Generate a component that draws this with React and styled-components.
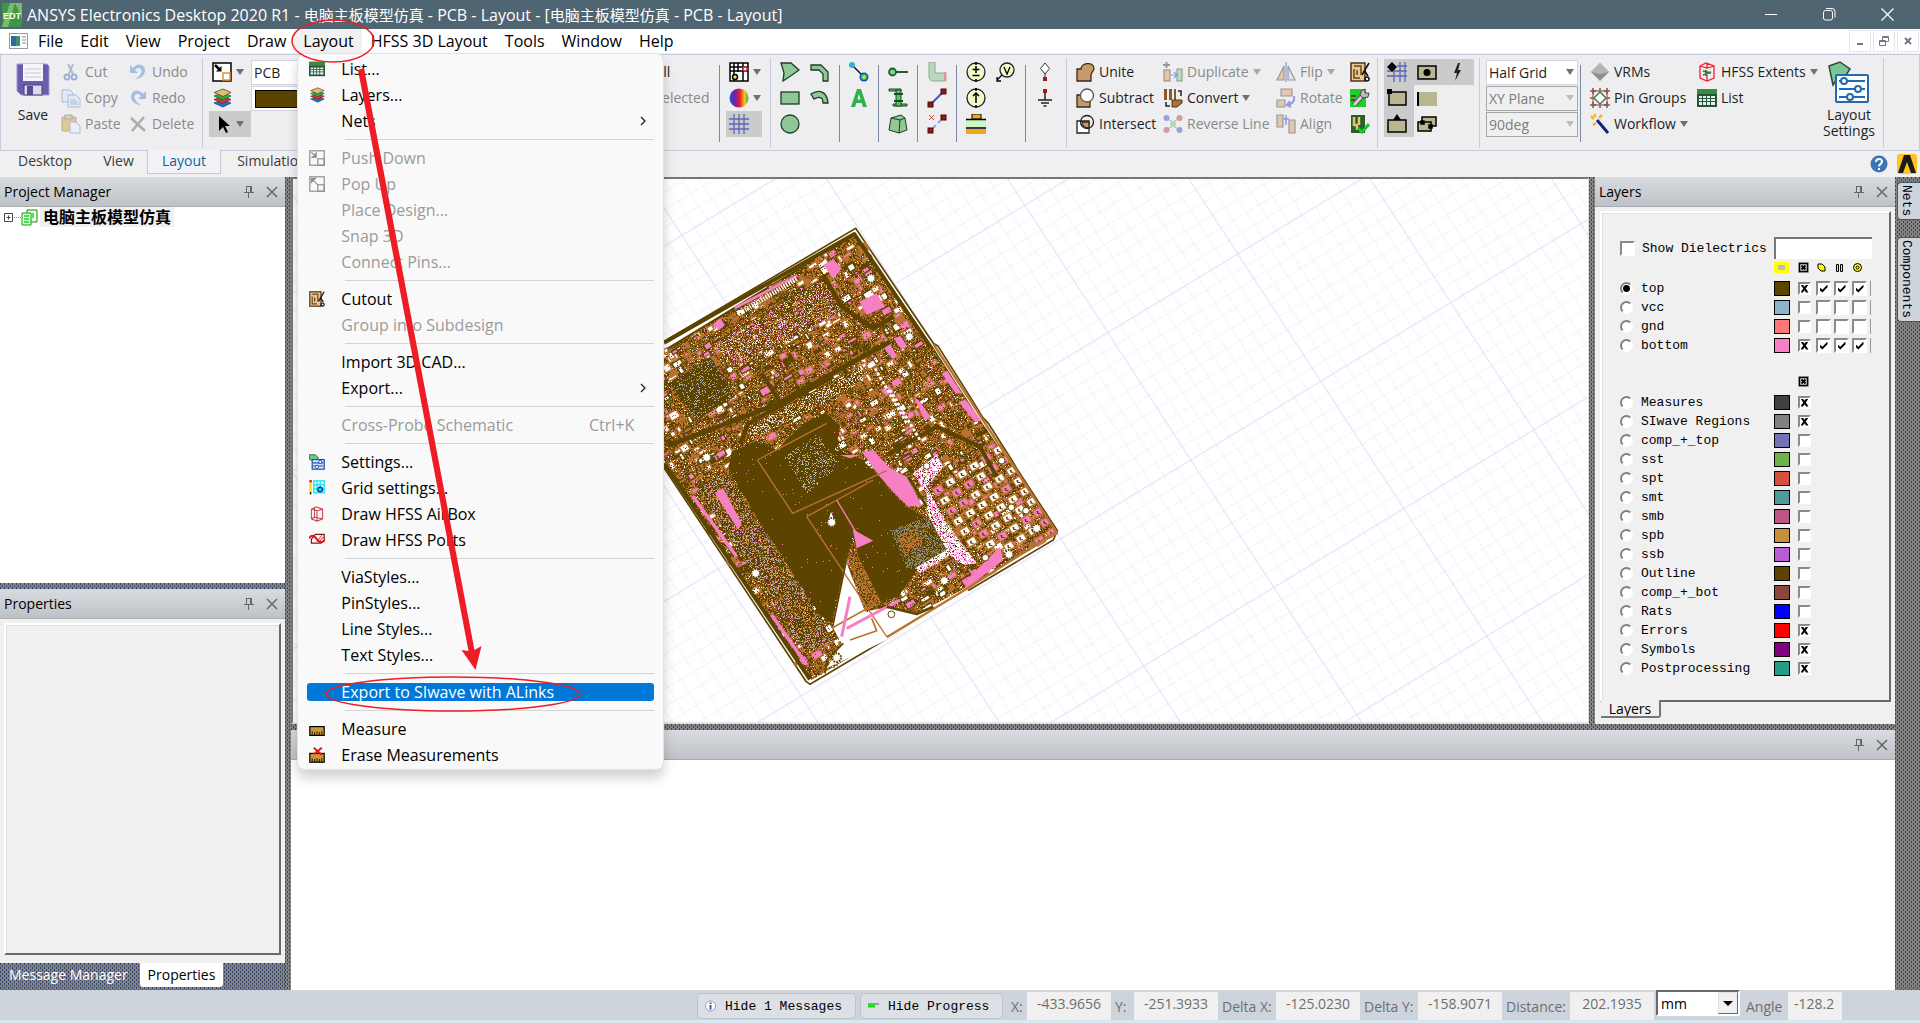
import React from "react";
import styled, { createGlobalStyle, css } from "styled-components";

const UI = `"Open Sans", "Noto Sans", "Noto Sans CJK SC", sans-serif`;
const MONO = `"Liberation Mono", "Noto Sans CJK SC", monospace`;

const Global = createGlobalStyle`
  * { box-sizing: border-box; }
  body { margin: 0; background: #f0f0f0; font-family: ${UI}; font-size: 14px; color: #000; overflow: hidden; }
  button, select, input { font: inherit; color: inherit; margin: 0; }
  button { border: 0; background: none; padding: 0; white-space: nowrap; text-align: left; }
  svg { flex: none; }
`;

const mesh = css`
  background-color: #848484;
  background-image:
    conic-gradient(from 0deg at 1px 2px, transparent 270deg, #33436b 0),
    conic-gradient(from 0deg at 1px 2px, transparent 270deg, #33436b 0);
  background-size: 4px 4px;
  background-position: 0 0, 2px 2px;
`;

/* ---------- shell ---------- */
const Shell = styled.div`
  position: relative;
  display: flex;
  flex-direction: column;
  height: 100vh;
`;
const TitleBar = styled.header`
  display: flex;
  align-items: center;
  height: 29px;
  padding: 0 4px 0 2px;
  gap: 5px;
  background: #506572;
  color: #fff;
  h1 { flex: 1; margin: 0; font-size: 16px; line-height: 28px; font-weight: 400; white-space: nowrap; }
  h1 span { font-size: 15px; }
`;
const WindowButton = styled.button`
  display: grid;
  place-items: center;
  width: 58px;
  height: 29px;
  margin-left: -5px;
`;
const MenuBar = styled.nav`
  display: flex;
  align-items: center;
  height: 24px;
  padding: 0 1px 0 9px;
  background: #fff;
  font-size: 16px;
`;
const MenuItem = styled.div`
  position: relative;
  height: 24px;
  background: ${(p) => (p.$open ? "#f1f1f1" : "none")};
  > button { height: 24px; padding: 0 8px 0 9px; line-height: 24px; }
`;
const Spacer = styled.div`
  flex: 1;
`;
const MdiButton = styled.button`
  display: grid;
  place-items: center;
  width: 22px;
  height: 22px;
  margin-left: 2px;
  border: 1px solid #e4e4e8;
  background: #fff;
`;

/* ---------- ribbon ---------- */
const Ribbon = styled.div`
  display: flex;
  height: 97px;
  padding: 3px 0 0;
  margin-top: 1px;
  border: 1px solid #c9c9dc;
  background: #eeeef1;
  overflow: hidden;
`;
const Group = styled.section`
  display: flex;
  height: 90px;
  padding: 1px ${(p) => p.$pr ?? 8}px 0 ${(p) => p.$pl ?? 8}px;
  border-right: 1px solid #c9c9dc;
  width: ${(p) => (p.$w ? p.$w + "px" : "auto")};
  flex: none;
`;
const Tools = styled.div`
  display: grid;
  grid-auto-flow: column;
  grid-template-rows: repeat(3, 26px);
  grid-template-columns: ${(p) => p.$cols};
  align-items: center;
  height: 78px;
  flex: none;
`;
const Rule = styled.div`
  width: 1px;
  height: 77px;
  margin: 6px ${(p) => p.$r ?? 9}px 0 ${(p) => p.$l ?? 9}px;
  background: #7b8aa0;
  flex: none;
`;
const Tool = styled.button`
  display: flex;
  align-items: center;
  gap: 4px;
  height: 26px;
  line-height: 26px;
  color: #1e1e1e;
  padding: 0 0 0 ${(p) => (p.$pad ? 3 : 0)}px;
  background: ${(p) => (p.$on ? "#cbcbcb" : "none")};
  &:disabled { color: #8a8a8a; }
  &:disabled svg { opacity: 0.55; }
`;
const BigTool = styled.button`
  display: flex;
  flex-direction: column;
  align-items: center;
  width: ${(p) => p.$w}px;
  padding-top: 2px;
  gap: ${(p) => p.$gap ?? 4}px;
  line-height: 16px;
  text-align: center;
  white-space: normal;
  color: #1e1e1e;
`;
const PickWrap = styled.div`
  position: relative;
  width: ${(p) => p.$w}px;
  height: 25px;
  select {
    appearance: none;
    width: 100%;
    height: 25px;
    padding: 0 2px;
    border: 1px solid ${(p) => (p.$off ? "#a6a6a6" : "#d4d4de")};
    border-radius: 0;
    background: ${(p) => (p.$off ? "#f0f0f0" : "#fff")};
    color: ${(p) => (p.$off ? "#7d7d7d" : "#1e1e1e")};
    opacity: 1;
  }
  svg { position: absolute; right: 4px; top: 9px; pointer-events: none; opacity: ${(p) => (p.$off ? 0.4 : 1)}; }
`;
const ColorPick = styled.button`
  width: 120px;
  height: 25px;
  padding: 3px;
  border: 1px solid #d4d4de;
  background: #fff;
  &::before { content: ""; display: block; height: 16px; border: 1px solid #000; background: #5c4400; }
`;
const TabRow = styled.div`
  display: flex;
  align-items: center;
  height: 27px;
  margin-top: -1px;
  padding-right: 3px;
  background: linear-gradient(#c9c9dc 1px, #f0f0f0 1px);
  z-index: 1;
`;
const RibbonTab = styled.button`
  height: ${(p) => (p.$on ? 24 : 23)}px;
  width: ${(p) => p.$w}px;
  padding-bottom: 2px;
  line-height: 20px;
  text-align: center;
  color: ${(p) => (p.$on ? "#0b64a0" : "#3c3c3c")};
  border: solid #c9c9dc;
  border-width: ${(p) => (p.$on ? "0 1px 1px" : "0")};
  background: ${(p) => (p.$on ? "#f3f3f7" : "none")};
  align-self: flex-start;
`;

/* ---------- docking layout ---------- */
const Body = styled.main`
  display: flex;
  flex: 1;
  min-height: 0;
`;
const Side = styled.aside`
  display: flex;
  flex-direction: column;
  width: 285px;
  flex: none;
`;
const Center = styled.div`
  display: flex;
  flex-direction: column;
  flex: 1;
  min-width: 0;
`;
const Upper = styled.div`
  display: flex;
  flex: 1;
  min-height: 0;
`;
const VSplit = styled.div`
  ${mesh}
  width: 6px;
  flex: none;
`;
const HSplit = styled.div`
  ${mesh}
  height: 6px;
  flex: none;
`;
const PanelHead = styled.div`
  display: flex;
  align-items: center;
  justify-content: space-between;
  height: 30px;
  padding: 0 7px 0 4px;
  flex: none;
  border-bottom: 1px solid #a9acb0;
  background: linear-gradient(#d8dbdf, #bec1c5);
  h2 { margin: 0; font-size: 14px; font-weight: 400; }
  div { display: flex; gap: 12px; }
  button { display: grid; }
`;
const Tree = styled.div`
  flex: 1;
  background: #fff;
  padding: 0 4px;
`;
const TreeRow = styled.div`
  display: flex;
  align-items: center;
  gap: 2px;
  height: 20px;
  b { padding: 0 3px; line-height: 20px; font-size: 16px; background: #f0f0f0; }
`;
const PropsPanel = styled.section`
  display: flex;
  flex-direction: column;
  height: 374px;
  flex: none;
  background: #f0f0f0;
`;
const Frame = styled.div`
  flex: 1;
  margin: ${(p) => p.$m};
  border: 2px solid;
  border-color: #fff #696969 #696969 #fff;
  box-shadow: inset 1px 1px 0 #e0e0e0;
  overflow: hidden;
`;
const DockTabs = styled.div`
  ${mesh}
  display: flex;
  gap: 4px;
  height: 27px;
  flex: none;
  padding-left: 1px;
`;
const DockTab = styled.button`
  height: 24px;
  padding: 0 8px;
  line-height: 24px;
  font-size: 14px;
  border-radius: 0 0 3px 3px;
  color: ${(p) => (p.$on ? "#000" : "#fff")};
  background: ${(p) => (p.$on ? "#fff" : "none")};
`;
const View = styled.section`
  display: flex;
  flex: 1;
  min-width: 0;
  overflow: hidden;
  background: #fff;
  border: solid;
  border-width: 2px 1px 2px 2px;
  border-color: #777 #e3e3e3 #e3e3e3 #777;
  > svg { flex: 1; min-width: 0; }
`;
const LayerPanel = styled.aside`
  display: flex;
  flex-direction: column;
  width: 300px;
  flex: none;
  background: #f0f0f0;
`;
const LayerTab = styled.button`
  align-self: flex-start;
  width: 60px;
  height: 18px;
  margin: -2px 0 6px 6px;
  text-align: center;
  line-height: 18px;
  background: #f0f0f0;
  border: 2px solid #777;
  border-width: 0 2px 2px 0;
  border-radius: 0 0 3px 0;
  overflow: hidden;
`;
const LayerList = styled.div`
  width: 270px;
  padding: 24px 0 0 18px;
  font-family: ${MONO};
  font-size: 13px;
  overflow: hidden;
`;
const LayerRow = styled.div`
  display: grid;
  grid-template-columns: 154px 24px 18px 18px 18px 18px 1px;
  align-items: center;
  height: ${(p) => p.$h ?? 19}px;
  margin: ${(p) => p.$m ?? 0};
  label { display: flex; align-items: center; gap: 8px; white-space: nowrap; overflow: hidden; }
`;
const DielRow = styled.div`
  display: grid;
  grid-template-columns: 148px 98px;
  column-gap: 6px;
  align-items: center;
  height: 22px;
  label { display: flex; align-items: center; gap: 7px; white-space: nowrap; overflow: hidden; }
  input[type="text"] { height: 22px; width: 98px; border: solid; border-width: 2px 0 0 2px; border-color: #777; background: #fff; }
`;
const Radio = styled.input`
  appearance: none;
  width: 13px;
  height: 13px;
  border-radius: 50%;
  border: 2px solid;
  border-color: #808080 #fff #fff #808080;
  background: #fff;
  flex: none;
  &:checked { background: radial-gradient(circle, #000 3px, #fff 4px); }
`;
const Check = styled.input`
  appearance: none;
  display: grid;
  place-items: center;
  width: ${(p) => p.$size}px;
  height: ${(p) => p.$size}px;
  border: 2px solid;
  border-color: #8a8a8a #fff #fff #8a8a8a;
  background: #fff;
  flex: none;
  &:checked::before {
    content: "";
    width: 8px;
    height: 8px;
    background: #000;
    clip-path: ${(p) =>
      p.$cross
        ? "polygon(0 0, 30% 0, 50% 28%, 70% 0, 100% 0, 66% 50%, 100% 100%, 70% 100%, 50% 72%, 30% 100%, 0 100%, 34% 50%)"
        : "polygon(0 35%, 36% 65%, 100% 0, 100% 35%, 36% 100%, 0 68%)"};
  }
`;
const Swatch = styled.span`
  width: 16px;
  height: 15px;
  border: 1px solid #000;
  background: ${(p) => p.$c};
`;
const Cut = styled.span`
  height: 15px;
  background: #999;
`;
const Rail = styled.div`
  ${mesh}
  display: flex;
  flex-direction: column;
  align-items: flex-end;
  gap: 17px;
  width: 25px;
  padding-top: 5px;
  flex: none;
`;
const RailTab = styled.button`
  width: 23px;
  padding: 2px 5px 3px 0;
  writing-mode: vertical-rl;
  line-height: 17px;
  font-family: ${MONO};
  font-size: 13px;
  border: 1px solid #3f5878;
  border-right: 0;
  border-radius: 4px 0 0 4px;
  background: #ced4dc;
`;
const Output = styled.section`
  display: flex;
  flex-direction: column;
  height: 260px;
  flex: none;
  background: #fff;
`;

/* ---------- status bar ---------- */
const Status = styled.footer`
  display: flex;
  justify-content: flex-end;
  height: 33px;
  flex: none;
  padding-right: 78px;
  background: #ced4dc;
  border-bottom: 3px solid #d9e9f2;
  color: #6e6e6e;
`;
const StatusButton = styled.button`
  display: flex;
  align-items: center;
  gap: 9px;
  width: ${(p) => p.$w}px;
  height: 26px;
  margin: 3px 4px 0 0;
  padding-left: 7px;
  border: 1px solid #bcc4ce;
  border-radius: 4px;
  background: #dcdfe4;
  color: #000;
  font-family: ${MONO};
  font-size: 13px;
`;
const StatusLabel = styled.label`
  width: ${(p) => p.$w}px;
  padding-left: 4px;
  line-height: 33px;
  white-space: nowrap;
`;
const StatusValue = styled.input`
  width: ${(p) => p.$w ?? 84}px;
  height: 28px;
  margin-top: 2px;
  padding: 0 0 6px;
  border: 0;
  border-radius: 0;
  text-align: ${(p) => (p.$w ? "left" : "center")};
  text-indent: ${(p) => (p.$w ? 6 : 0)}px;
  background: #f0f0f0;
`;
const UnitWrap = styled.div`
  position: relative;
  width: 84px;
  height: 26px;
  margin: 0 2px;
  select {
    appearance: none;
    width: 84px;
    height: 26px;
    padding: 0 3px;
    color: #000;
    border: 2px solid;
    border-color: #696969 #fff #fff #696969;
    border-radius: 0;
    background: #fff;
  }
  span {
    position: absolute;
    right: 2px;
    top: 2px;
    display: grid;
    place-items: center;
    width: 20px;
    height: 22px;
    background: #f0f0f0;
    border: 1px solid;
    border-color: #e3e3e3 #696969 #696969 #e3e3e3;
    pointer-events: none;
  }
`;

/* ---------- drop-down menu ---------- */
const Drop = styled.div`
  position: absolute;
  top: 24px;
  left: 3px;
  z-index: 5;
  display: flex;
  flex-direction: column;
  width: 367px;
  padding: 2px 9px 0;
  height: 717px;
  border: 1px solid #e2e2e2;
  border-radius: 8px;
  background: #f9f9f9;
  box-shadow: 0 8px 12px rgba(0, 0, 0, 0.18);
`;
const DropItem = styled.button`
  display: grid;
  grid-template-columns: 34px 1fr auto;
  align-items: center;
  width: 100%;
  height: 26px;
  flex: none;
  padding: 0 8px 0 0;
  line-height: 18px;
  color: ${(p) => (p.$on ? "#fff" : "#000")};
  &:disabled { color: #9b9b9b; }
  > svg { margin-left: 2px; }
  ${(p) => p.$on && css`height: 18px; margin: 4px 0; background: #0078d7; border-radius: 3px;`}
  kbd { font: inherit; padding-right: 12px; }
`;
const DropRule = styled.hr`
  height: 1px;
  flex: none;
  margin: 5px 0 5px 38px;
  border: 0;
  background: #d3d3d3;
`;
const Annotation = styled.svg`
  position: absolute;
  left: 0;
  top: 0;
  z-index: 6;
  pointer-events: none;
`;

/* ---------- icons ---------- */
const G = "#8fc796";
const O = "#1d3d24";
const shapes = {
  cut: <g fill="none" strokeWidth="2"><path d="M7 2l5 10M12 2L8 12" stroke="#8392a8" /><circle cx="6" cy="15" r="2.5" stroke="#5b7fc0" /><circle cx="13" cy="15" r="2.5" stroke="#5b7fc0" /></g>,
  copy: <g fill="#dce8f8" stroke="#6f93c8"><path d="M1 2h8l3 3v9H1z" /><path d="M7 7h8l4 4v8H7z" /><path d="M9 12h6M9 14h8M9 16h8" /></g>,
  paste: <g><rect x="1" y="3" width="14" height="14" rx="1" fill="#d5a84c" stroke="#94722d" /><rect x="4" y="1" width="7" height="4" fill="#bbb" stroke="#777" /><path d="M9 8h6l4 4v7H9z" fill="#e8f0fa" stroke="#7a93b8" /></g>,
  undo: <path d="M2 3v8h8L7 8c4-4 8-1 6 3-1 3-4 5-6 6 8 0 12-7 9-12-3-4-8-3-11 1z" fill="#6c97da" />,
  redo: <path d="M18 3v8h-8l3-3C9 4 5 7 7 11c1 3 4 5 6 6-8 0-12-7-9-12 3-4 8-3 11 1z" fill="#6c97da" />,
  del: <path d="M3 4l14 13M16 3L4 17" stroke="#777" strokeWidth="2.5" />,
  hier: <g><rect x="1" y="1" width="18" height="18" fill="#fff" stroke="#000" strokeWidth="1.5" /><rect x="11" y="11" width="7" height="7" fill="#fff" stroke="#e8902b" strokeWidth="1.5" /><path d="M3 3l5 5" stroke="#000" strokeWidth="2.500" /><path d="M9.500 4v5.500H4z" /></g>,
  layers: <g strokeWidth=".8"><path d="M2 15l9-3 8 3-8 4z" fill="#1c6fd0" stroke="#134b8e" /><path d="M2 11.500l9-3 8 3-8 4z" fill="#e53026" stroke="#8e1d15" /><path d="M2 8l9-3 8 3-8 4z" fill="#2ba84a" stroke="#156b2b" /><path d="M2 4.500L11 1l8 3.500-8 4z" fill="#d8bf7a" stroke="#5a4416" /></g>,
  arrow: <path d="M7 2v15l4-4 3 6 2-1-3-6h5z" fill="#000" />,
  net: <g fill="none" stroke="#000" strokeWidth="1.500"><rect x="1" y="1" width="18" height="18" fill="#fff" /><path d="M1 5h18M5 1v18M1 9h18M9 1v9M14 1v18" /><circle cx="6" cy="15" r="2.500" fill="#f0e850" /><circle cx="16" cy="7" r="2" stroke="#e04040" /></g>,
  rainbow: <g><defs><linearGradient id="rb"><stop offset="0" stopColor="#1456c8" /><stop offset=".3" stopColor="#7a1fa0" /><stop offset=".55" stopColor="#e8202a" /><stop offset=".8" stopColor="#f6c820" /><stop offset="1" stopColor="#38b048" /></linearGradient></defs><circle cx="10" cy="10" r="9.500" fill="url(#rb)" /></g>,
  grid: <path d="M5 0v20M10 0v20M15 0v20M0 5h20M0 10h20M0 15h20" stroke="#5b69b8" strokeWidth="1.300" fill="none" />,
  poly: <path d="M1 1l10 0 8 7-7 5-9 6 1-8z" fill={G} stroke={O} strokeWidth="1.300" />,
  rect: <rect x="1" y="4" width="18" height="12" fill={G} stroke={O} strokeWidth="1.300" />,
  circ: <circle cx="10" cy="10" r="9" fill={G} stroke={O} strokeWidth="1.300" />,
  trace: <path d="M1 3h10l7 7v9h-5v-7l-4-4H1z" fill={G} stroke={O} strokeWidth="1.300" />,
  arc: <path d="M1 6c8-5 16-3 17 9h-5c0-6-4-7-9-4z" fill={G} stroke={O} strokeWidth="1.300" />,
  wire: <g><path d="M3 3l12 12" stroke="#000" strokeWidth="1.300" /><circle cx="3" cy="3" r="3" fill="#2bb4d8" /><circle cx="15" cy="15" r="4.500" fill="#1448d0" /><circle cx="15" cy="15" r="3" fill="#3cc860" /><circle cx="15" cy="15" r="1.500" fill="#e8e840" /></g>,
  letter: <path d="M2 19L8 1h4l6 18h-4l-1.300-4H7.300L6 19zM8.300 11.500h3.400L10 6z" fill="#2fb14a" />,
  pin: <g><path d="M6 10h14" stroke="#1f5f28" strokeWidth="2" /><circle cx="4.500" cy="10" r="3.500" fill="#7fd68a" stroke="#1f5f28" strokeWidth="1.800" /></g>,
  via: <g fill="#57c265" stroke="#1b4a22"><path d="M1 1h12v2H1zM5 16h14v2H5z" /><rect x="8" y="2" width="5" height="16" /><path d="M6 6h9M6 13h9" strokeWidth="2" /></g>,
  solid: <g fill={G} stroke={O}><path d="M3 4l10-3 4 3 2 12-8 3-10-3z" /><path d="M3 4l9 2 5-2M12 6l-1 13" /></g>,
  bend: <g><path d="M2 0h6v11h11v8H7c-4 0-5-2-5-5z" fill="#b9d8bd" stroke="#90a894" /><path d="M17 10h2v9h-2z" fill="#f09090" /></g>,
  line: <g fill="#8e1b0e" stroke="#4a0a04"><path d="M4 16L16 4" stroke="#3b55d8" strokeWidth="2" /><rect x="1" y="14" width="5" height="5" /><rect x="14" y="1" width="5" height="5" /></g>,
  unline: <g fill="#8e1b0e" stroke="#4a0a04"><path d="M6 14l9-9" stroke="#8fa6f0" strokeWidth="2" strokeDasharray="4 3" /><rect x="1" y="14" width="5" height="5" /><rect x="14" y="1" width="5" height="5" /><path d="M2 1l5 5M7 1L2 6" stroke="#d04a3a" /></g>,
  volt: <g><circle cx="10" cy="10" r="9" fill="#f4f8c8" stroke="#222" strokeWidth="1.300" /><path d="M10 4v7M6.500 7.500h7M6.500 13.500h7M10 0v3M10 17v3" stroke="#000" strokeWidth="1.500" /></g>,
  amp: <g><circle cx="10" cy="10" r="9" fill="#f4f8c8" stroke="#222" strokeWidth="1.300" /><path d="M10 5v10M7 8l3-3 3 3M10 0v3M10 17v3" stroke="#000" strokeWidth="1.500" fill="none" /></g>,
  probe: <g><circle cx="11" cy="8" r="7" fill="#f4f8c8" stroke="#222" strokeWidth="1.300" /><path d="M8 5l3 7 3-7M6 13l-5 5M1 15v4h4" stroke="#000" strokeWidth="1.300" fill="none" /></g>,
  stack: <g><rect x="6" y="0" width="9" height="5" fill="#f2a81d" stroke="#000" /><rect x="0" y="5" width="20" height="9" fill="#cdf6c6" /><path d="M0 5.500h20M0 14h20" stroke="#000" strokeWidth="1.500" /><rect x="0" y="15" width="20" height="5" fill="#f2a81d" /></g>,
  diode: <g><path d="M10 1l4.500 5.500-4.500 5.500-4.500-5.500z" fill="#fff" stroke="#333" /><path d="M10 12v3" stroke="#333" /><rect x="8" y="15" width="4" height="4" fill="#a01818" /></g>,
  gnd: <g><rect x="8" y="1" width="4" height="4" fill="#a01818" /><path d="M10 5v7M3 12h14M6 15h8M8.500 18h3" stroke="#222" strokeWidth="1.500" /></g>,
  unite: <path d="M2 7h4c0-6 12-8 13-1 0 4-3 4-3 7v6H2z" fill="#c79a6b" stroke="#3c2a14" strokeWidth="1.300" />,
  subtract: <g strokeWidth="1.300"><path d="M2 7h13v12H2z" fill="#c79a6b" stroke="#3c2a14" /><circle cx="12" cy="7.500" r="6.500" fill="#fff" stroke="#555" /></g>,
  intersect: <g strokeWidth="1.300"><path d="M2 7h12v12H2z" fill="#fff" stroke="#222" /><circle cx="12" cy="8" r="6.500" fill="none" stroke="#222" /><path d="M7 8h7v6c-4 0-7-2-7-6z" fill="#c79a6b" stroke="#3c2a14" /></g>,
  dup: <g strokeWidth="1.200"><path d="M0 3h7M3.500 0v6" stroke="#555" strokeWidth="2" /><rect x="1" y="8" width="6" height="11" fill="#dba877" stroke="#6d4a28" /><rect x="14" y="7" width="5" height="12" fill="#8fd09a" stroke="#3c6f46" /><path d="M8 13h5M11 10l3 3-3 3" stroke="#3e49d8" fill="none" /></g>,
  convert: <g><path d="M1 1h3v11H1zM6 1h3v11H6zM11 1h2v11h-2z" fill="#8d5a2c" /><path d="M9 12h10v3l-5 4H9z" fill="#a9713c" stroke="#5a3715" /><path d="M15 3h3v5M3 14v4h4" stroke="#222" fill="none" strokeWidth="1.500" /></g>,
  reverse: <g><path d="M3 4l7 4 7-4M3 16l7-4 7 4" stroke="#777" fill="none" /><circle cx="3.500" cy="4" r="3" fill="#5560c8" /><circle cx="16.500" cy="4" r="3" fill="#c85560" /><circle cx="3.500" cy="16" r="3" fill="#c85560" /><circle cx="16.500" cy="16" r="3" fill="#5560c8" /><circle cx="10" cy="10" r="3" fill="#7fc88a" /></g>,
  flip: <g strokeWidth="1.200"><path d="M10 0v20" stroke="#4455d8" /><path d="M8 4v14H1z" fill="#dba877" stroke="#555" /><path d="M12 4v14h7z" fill="#ddd" stroke="#555" /></g>,
  rotate: <g strokeWidth="1.200"><path d="M5 1h11v7H5zM1 12h8v7H1z" fill="#dba877" stroke="#555" /><path d="M18 8c1 6-2 8-6 9M14 13l-3 4 4 2" stroke="#4455d8" fill="none" strokeWidth="2" /></g>,
  align: <g strokeWidth="1.200"><path d="M1 1h6v12H1zM13 6h6v13h-6z" fill="#dba877" stroke="#555" /><path d="M10 1v10M7 5h6" stroke="#4455d8" strokeWidth="1.500" /></g>,
  cutout: <g><rect x="1" y="1" width="14" height="18" fill="#e9c795" stroke="#4f3413" strokeWidth="1.500" /><path d="M4 4h8M4 7v9h6M7 8v5M11 5v8" stroke="#6a4519" strokeWidth="1.500" fill="none" /><path d="M19 1l-7 12M14 8l4 6" stroke="#111" strokeWidth="1.500" /><circle cx="17" cy="17" r="2" fill="none" stroke="#111" strokeWidth="1.500" /></g>,
  repair: <g><rect x="0" y="1" width="16" height="18" fill="#1ccf2a" /><path d="M1 8h5M1 12h4" stroke="#6a4519" strokeWidth="2" /><path d="M4 17L14 6" stroke="#555" strokeWidth="5" /><path d="M4 17L14 6" stroke="#cfcfcf" strokeWidth="3" /><path d="M11 3l4-2 0 4 4 0-1 4-5 1-3-3z" fill="#bbb" stroke="#444" /></g>,
  verify: <g><rect x="1" y="1" width="14" height="18" fill="#2a5f2c" /><path d="M4 3v8h3v5M9 3v8" stroke="#e7c37a" strokeWidth="2.500" fill="none" /><path d="M8 14l4 4 7-8" stroke="#18c828" strokeWidth="3" fill="none" /></g>,
  snapgrid: <g><path d="M7 3v17M13 0v20M18 0v20M0 9h20M0 14h20M10 4h10" stroke="#5b69b8" strokeWidth="1.300" /><path d="M5 0l5 5-5 5-5-5z" fill="#000" /></g>,
  snapctr: <g><rect x="1" y="4" width="18" height="13" fill="#b9b78f" stroke="#000" strokeWidth="1.500" /><circle cx="10" cy="10.500" r="3.500" /></g>,
  bolt: <path d="M11 1L7 11h3l-2 8 6-11h-3l2-7z" fill="#222" />,
  snapv: <g><rect x="2" y="4" width="17" height="13" fill="#b9b78f" stroke="#000" strokeWidth="1.500" /><rect x="0" y="1" width="5" height="5" /></g>,
  snapedge: <g><rect x="1" y="4" width="19" height="14" fill="#b9b78f" /><path d="M1 4v14" stroke="#000" strokeWidth="2" /></g>,
  snapmid: <g><rect x="1" y="6" width="18" height="12" fill="#b9b78f" stroke="#000" strokeWidth="1.500" /><path d="M10 0l4 6H6z" /></g>,
  snapint: <g fill="#b9b78f" stroke="#000" strokeWidth="1.500"><rect x="5" y="3" width="14" height="9" /><rect x="1" y="8" width="13" height="9" /><rect x="4" y="7" width="3" height="3" fill="#000" /><rect x="12" y="11" width="3" height="3" fill="#000" /></g>,
  vrm: <g><path d="M10 1l9 9-9 9-9-9z" fill="#8f8f8f" /><path d="M10 1l9 9-9 2-9-2z" fill="#b4b4b4" /></g>,
  pins: <g fill="none"><rect x="3" y="3" width="14" height="14" stroke="#d05050" strokeWidth="1.300" /><path d="M10 4l6 6-6 6-6-6z" fill="#fff" stroke="#3f7f58" strokeWidth="1.500" /><path d="M3 0v6M0 3h6M17 0v6M14 3h6M3 14v6M0 17h6M17 14v6M14 17h6M10 0v3M10 17v3M0 10h3M17 10h3" stroke="#7a5a4a" strokeWidth="1.500" /></g>,
  wand: <g><path d="M7 6l11 13" stroke="#15237c" strokeWidth="3" /><path d="M1 2l3 3M12 1L9 4M3 11l3-2M5 0v3" stroke="#f2b42a" strokeWidth="2.500" /></g>,
  extents: <g fill="none" stroke="#e23" strokeWidth="1.300"><path d="M3 4l6-3 8 3v12l-7 3-7-3zM3 4l7 2 7-2M10 1v5M10 19v-6" /><path d="M6 9l8 2M6 13l8-3M9 8v6" stroke="#2f7a3a" strokeWidth="1.800" /></g>,
  list: <g><rect x="0" y="1" width="20" height="18" fill="#24543d" /><rect x="0" y="1" width="20" height="5" fill="#3f8a3a" /><path d="M2 8h3v2H2zM6 8h3v2H6zM10 8h3v2h-3zM14 8h4v2h-4zM2 11h3v2H2zM6 11h3v2H6zM10 11h3v2h-3zM14 11h4v2h-4zM2 14h3v3H2zM6 14h3v3H6zM10 14h3v3h-3zM14 14h4v3h-4z" fill="#e7efe9" /></g>,
  push: <g fill="none" stroke="#8f8f8f" strokeWidth="1.500"><rect x="1" y="1" width="18" height="18" /><rect x="11" y="11" width="8" height="8" /><path d="M3 3l6 6M9 4v5H4z" fill="#8f8f8f" /></g>,
  pop: <g fill="none" stroke="#8f8f8f" strokeWidth="1.500"><rect x="1" y="1" width="18" height="18" /><rect x="11" y="11" width="8" height="8" /><path d="M11 11L4 4" /><path d="M3 8V3h5z" fill="#8f8f8f" /></g>,
  settings: <g><path d="M0 1h8l4 4-6 4-5-2z" fill="#6cc98a" stroke="#1d5a36" /><rect x="4" y="7" width="15" height="12" fill="#dbe9fb" stroke="#1c4fa8" strokeWidth="1.500" /><path d="M5 11h13M5 15h13" stroke="#1c4fa8" strokeWidth="1.500" /><circle cx="14" cy="10" r="2" fill="#fff" stroke="#0a2fd0" /><circle cx="10" cy="16" r="2" fill="#fff" stroke="#0a2fd0" /></g>,
  gridset: <g><path d="M2 3v12" stroke="#f0e020" strokeWidth="3" /><path d="M2 0v3" stroke="#e01010" strokeWidth="3" /><path d="M2 15v3" stroke="#222" strokeWidth="2" /><rect x="6" y="1" width="13" height="15" fill="#e7ffff" stroke="#12dff0" strokeWidth="1.500" /><path d="M10 1v15M14 1v15M6 6h13M6 11h13" stroke="#12dff0" strokeWidth="1.500" /><circle cx="14" cy="12" r="3" fill="#26c0f0" stroke="#0a2fa0" strokeWidth="1.500" /></g>,
  airbox: <g fill="none" stroke="#c9404c" strokeWidth="1.300"><path d="M3 4l6-3 8 3v12l-7 3-7-3zM3 4l7 2 7-2M10 6v13M7 2v12l-4 2M7 14l10 2" /></g>,
  ports: <g fill="none"><path d="M8 3h11v8l-4 3H3V9z" stroke="#8e1014" strokeWidth="1.500" /><path d="M10 12l6-8M13 12l5-6" stroke="#8e1014" /><path d="M0 8c3-5 6-4 9 0 3 5 7 6 11 2" stroke="#f01018" strokeWidth="2.500" /></g>,
  ruler: <g><rect x="1" y="7" width="18" height="11" fill="#c9963a" stroke="#000" strokeWidth="1.500" /><path d="M4 18v-5M7 18v-4M10 18v-5M13 18v-4M16 18v-5" stroke="#000" /></g>,
  erase: <g><rect x="1" y="8" width="18" height="11" fill="#c9963a" stroke="#000" strokeWidth="1.500" /><path d="M4 19v-5M7 19v-4M10 19v-5M13 19v-4M16 19v-5" stroke="#000" /><path d="M6 1l10 9M16 1L6 9" stroke="#e8141c" strokeWidth="2.500" /></g>,
};
const Icon = ({ n, s = 20 }) => (
  <svg width={s} height={s} viewBox="0 0 20 20" aria-hidden="true">{shapes[n]}</svg>
);
const Caret = () => (
  <svg width="8" height="6" viewBox="0 0 8 6" aria-hidden="true"><path d="M0 0h8L4 6z" fill="#707070" /></svg>
);

const SaveIcon = () => (
  <svg width="36" height="36" viewBox="0 0 36 36" aria-hidden="true">
    <path d="M2 3h30l2 2v29H6l-4-4z" fill="#6d5cae" stroke="#a49ad0" />
    <rect x="8" y="3" width="20" height="17" fill="#f5f5fa" />
    <path d="M10 8h16M10 12h16M10 16h16" stroke="#c9c9d6" />
    <rect x="9" y="24" width="18" height="10" fill="#dcdce8" stroke="#463a80" />
    <rect x="12" y="25" width="6" height="9" fill="#5a4b98" />
  </svg>
);
const LayoutSettingsIcon = () => (
  <svg width="42" height="42" viewBox="0 0 42 42" aria-hidden="true">
    <path d="M1 5l11-4 10 7-6 9-7 1-4 6z" fill="#7cc596" stroke="#2b4a38" strokeWidth="1.500" />
    <rect x="8" y="14" width="32" height="27" rx="1" fill="#f8fbff" stroke="#2468ae" strokeWidth="2" />
    <path d="M11 20h26M11 28h26M11 36h26" stroke="#2468ae" strokeWidth="2" />
    <g fill="#fff" stroke="#2468ae" strokeWidth="2"><circle cx="16" cy="20" r="3" /><circle cx="30" cy="28" r="3" /><circle cx="22" cy="36" r="3" /></g>
  </svg>
);

/* ---------- board drawing ---------- */
const DARK = "#5c4400";
const COPPER = "#b8732f";
const PINK = "#f77fc4";

const rng = (seed) => () => {
  seed = (seed * 1664525 + 1013904223) >>> 0;
  return seed / 4294967296;
};
const inside = (poly, x, y) => {
  let hit = false;
  for (let i = 0, j = poly.length - 1; i < poly.length; j = i++) {
    const [xi, yi] = poly[i];
    const [xj, yj] = poly[j];
    if (yi > y !== yj > y && x < ((xj - xi) * (y - yi)) / (yj - yi) + xi) hit = !hit;
  }
  return hit;
};
const speckle = (poly, count, seed, size = 3) => {
  const r = rng(seed);
  const xs = poly.map((p) => p[0]);
  const ys = poly.map((p) => p[1]);
  const x0 = Math.max(0, Math.min(...xs)), x1 = Math.max(...xs), y0 = Math.min(...ys), y1 = Math.max(...ys);
  let d = "";
  for (let i = 0; i < count; i++) {
    const x = Math.round((x0 + r() * (x1 - x0)) / 3) * 3;
    const y = Math.round((y0 + r() * (y1 - y0)) / 3) * 3;
    if (inside(poly, x, y)) d += `M${x} ${y}h${size}v${size}h-${size}z`;
  }
  return d;
};
const pts = (p) => p.map((q) => q.join(",")).join(" ");

const outline = [[587, 55], [820, 400], [834, 408], [930, 560], [968, 622], [985, 640], [1055, 750], [1070, 775], [1192, 962], [1180, 990], [450, 1423], [438, 1414], [-160, 515], [-150, 490]];
const inner = [[585, 74], [818, 415], [958, 632], [1048, 762], [1180, 962], [1165, 984], [456, 1406], [442, 1395], [-140, 515]];
const pourA = [[205, 775], [215, 725], [290, 695], [350, 720], [430, 640], [500, 610], [540, 650], [525, 720], [600, 745], [650, 790], [690, 840], [740, 890], [810, 930], [860, 1030], [770, 1080], [715, 1160], [640, 1180], [600, 1050], [575, 970], [545, 1100], [515, 1240], [480, 1215], [380, 1060], [290, 920]];
const pourB = [[30, 520], [150, 440], [225, 560], [110, 630]];
const whiteA = [[577, 965], [517, 1250], [545, 1300], [500, 1375], [680, 1290], [930, 1146], [915, 1135], [820, 1185], [770, 1208], [690, 1190], [615, 1205], [560, 1060]];
const whiteB = [[760, 790], [830, 735], [850, 770], [800, 830], [860, 940], [950, 1060], [910, 1065], [870, 1035], [780, 1090], [765, 1075], [860, 1020], [800, 905], [800, 850]];
const slotArea = [[160, 400], [490, 205], [550, 300], [220, 480]];
const leftStrip = [[110, 830], [200, 790], [520, 1290], [440, 1330]];
const ddr = [[260, 650], [600, 470], [610, 510], [275, 690]];
const gpu = [[370, 740], [470, 670], [540, 760], [440, 850]];
const chip = [[690, 960], [800, 920], [860, 1030], [740, 1080]];

const parts = () => {
  const r = rng(77);
  const fills = ["#fff", PINK, COPPER, DARK, "#fff", PINK, "#fff"];
  const out = [];
  for (let i = 0; i < 1100; i++) {
    const u = r() * 845 + 5;
    const v = r() * 1070 + 10;
    const x = 450 + u * 0.855 - v * 0.546;
    const y = 1422 - u * 0.518 - v * 0.838;
    const w = 8 + r() * 24;
    const h = 6 + r() * 18;
    const f = fills[Math.floor(r() * fills.length)];
    const s = r() > 0.4 ? COPPER : DARK;
    if (x < -20 || inside(pourA, x, y) || inside(pourB, x, y) || inside(whiteA, x, y) || inside(whiteB, x, y) || !inside(inner, x, y)) continue;
    out.push(<rect key={i} x={-w / 2} y={-h / 2} width={w} height={h} fill={f} stroke={s} strokeWidth="4" transform={`translate(${Math.round(x)} ${Math.round(y)}) rotate(-31)`} />);
  }
  return out;
};
const cells = () => {
  const out = [];
  const r = rng(5);
  for (let i = 0; i < 6; i++)
    for (let j = 0; j < 9; j++) {
      const x = 835 + i * 38 + j * 20 - i * 2;
      const y = 840 - i * 24 + j * 31;
      if (!inside(inner, x, y) || y > 1010) continue;
      out.push(<rect key={`${i}-${j}`} x="-14" y="-11" width="28" height="22" fill={r() > 0.3 ? "#fff" : PINK} stroke={COPPER} strokeWidth="4" transform={`translate(${x} ${y}) rotate(-31)`} />);
      out.push(<path key={`${i}-${j}d`} d={`M${x - 6} ${y - 3}h6v6h6v3h-9z`} fill={DARK} />);
    }
  return out;
};
const rings = [[633, 205], [748, 380], [530, 1343], [1047, 1033], [140, 742], [515, 937], [1130, 955], [287, 1090], [853, 1112], [1025, 752], [1098, 902], [1054, 892], [800, 768], [694, 1213], [976, 1043]];

const Board = () => (
  <g transform="translate(367 31) scale(.33333)">
    <polygon points={pts(outline)} fill="#fff" stroke={DARK} strokeWidth="5" />
    <polygon points={pts(inner)} fill={DARK} stroke={DARK} strokeWidth="6" />
    <path d={speckle(inner, 85000, 11)} fill={COPPER} />
    <path d={speckle(inner, 5000, 13, 6)} fill={COPPER} />
    <path d={speckle(inner, 8000, 17)} fill="#fff" />
    <path d={speckle(inner, 4500, 19)} fill={PINK} />
    {parts()}
    <path d={speckle(inner, 9000, 21)} fill={DARK} />
    <path d={speckle(inner, 9000, 23)} fill={COPPER} />
    <polygon points={pts(slotArea)} fill={DARK} />
    <path d={speckle(slotArea, 3000, 31)} fill="#e9dfe6" />
    <path d={speckle(slotArea, 5200, 33)} fill={COPPER} />
    <path d={speckle(slotArea, 1300, 34)} fill={PINK} />
    <polygon points={pts(leftStrip)} fill={DARK} />
    <path d={speckle(leftStrip, 5500, 41)} fill="#b7b0a8" />
    <path d={speckle(leftStrip, 6000, 43)} fill={COPPER} />
    <path d={speckle(leftStrip, 1600, 45)} fill={PINK} />
    <polygon points={pts(ddr)} fill={DARK} />
    <path d={speckle(ddr, 3600, 47)} fill="#e6e0dc" />
    <path d={speckle(ddr, 2600, 48)} fill={COPPER} />
    <polygon points={pts(pourB)} fill={DARK} />
    <path d={speckle(pourB, 700, 51)} fill="#aaa" />
    <polygon points={pts(pourA)} fill={DARK} />
    <path d={speckle(pourA, 260, 53)} fill={PINK} />
    <path d={speckle(gpu, 700, 55)} fill="#b5b0a5" />
    <path d={speckle(chip, 1800, 57)} fill="#8d8878" />
    <polygon points="710,985 765,955 790,1000 735,1032" fill={COPPER} />
    <path d={speckle([[710, 985], [765, 955], [790, 1000], [735, 1032]], 250, 59)} fill={DARK} />
    <polygon points={pts(whiteA)} fill="#fff" />
    <polygon points="560,1035 590,1030 665,1180 620,1205" fill={COPPER} />
    <path d={speckle([[560, 1035], [590, 1030], [665, 1180], [620, 1205]], 900, 60)} fill={DARK} />
    <polygon points={pts(whiteB)} fill="#fff" />
    <path d={speckle(whiteB, 3400, 61)} fill={PINK} />
    <path d={speckle(whiteB, 900, 62)} fill={DARK} />
    {cells()}
    <g fill={PINK}>
      <polygon points="490,165 520,148 545,175 520,208" />
      <polygon points="540,735 600,735 570,745" />
      <polygon points="605,725 640,720 690,775 740,800 785,885 745,890 700,845 660,800" />
      <polygon points="578,958 640,992 590,1015" />
      <polygon points="915,1140 918,1110 1020,1012 1030,1050" />
      <polygon points="165,850 190,835 245,940 235,960" />
      <polygon points="895,575 918,570 965,632 945,635" />
      <polygon points="845,490 862,482 905,548 888,552" />
      <polygon points="598,275 650,250 675,290 620,315" />
      <polygon points="672,415 690,402 712,440 698,446" />
      <polygon points="700,385 722,378 742,410 726,418" />
      <polygon points="760,560 780,575 812,620 795,632" />
      <polygon points="158,345 180,325 195,345 178,360" />
    </g>
    <g fill="none" strokeLinejoin="round">
      <path d="M12 398L583 72L812 412" stroke={DARK} strokeWidth="12" />
      <path d="M12 760L450 1408" stroke={DARK} strokeWidth="12" />
      <path d="M98 858L230 1040M335 1215L440 1365" stroke={PINK} strokeWidth="10" />
      <path d="M224 294L412 196" stroke={PINK} strokeWidth="8" />
      <path d="M235 312L412 205" stroke="#fff" strokeWidth="14" strokeDasharray="4 4" />
      <path d="M30 705L345 585L690 395" stroke={DARK} strokeWidth="14" />
      <path d="M240 700L265 640L520 500M305 490L360 575" stroke={DARK} strokeWidth="12" />
      <path d="M490 195L545 290L640 355L700 320" stroke={DARK} strokeWidth="14" />
      <path d="M680 735L830 650L960 710L1010 800" stroke={DARK} strokeWidth="12" />
      <path d="M645 475L740 640M690 540L780 690" stroke="#fff" strokeWidth="8" strokeDasharray="9 6" />
      <path d="M292 750L398 910L680 782M440 920L680 1280M440 920L640 810M292 750L500 640" stroke={COPPER} strokeWidth="4" />
      <path d="M820 402L1188 965L918 1138L680 1282" stroke={COPPER} strokeWidth="7" />
      <path d="M515 1255L650 1180M570 1290L650 1262L635 1225" stroke={COPPER} strokeWidth="5" />
      <path d="M545 1280L570 1160M560 1255L720 1170" stroke={PINK} strokeWidth="9" />
      <path d="M530 870L590 970" stroke={PINK} strokeWidth="4" />
      <path d="M680 1190L770 1212L820 1190M800 890L745 800" stroke={DARK} strokeWidth="8" />
      <path d="M575 975L518 1250M495 1390L500 1350L550 1300" stroke={DARK} strokeWidth="5" />
    </g>
    <polygon points="513,905 503,940 527,940" fill="#fff" />
    {rings.map(([x, y], i) => (
      <circle key={x} cx={x} cy={y} r={i < 9 ? 13 : 10} fill="#fff" stroke={DARK} strokeWidth={i < 9 ? 6 : 3} strokeDasharray={i < 9 ? "5 3" : "none"} />
    ))}
  </g>
);

const Minor = Array.from({ length: 9 }, (_, i) => (i + 1) * 15.2);
const LayoutView = () => (
  <svg aria-label="PCB layout" role="img">
    <defs>
      <pattern id="grid" width="152" height="152" patternUnits="userSpaceOnUse" patternTransform="matrix(.855 -.518 .546 .838 731 26)">
        {Minor.map((m) => <path key={m} d={`M${m} 0V152M0 ${m}H152`} stroke="#f1f1fc" strokeWidth="1" strokeDasharray="6 1" />)}
        <path d="M.5 0V152M0 .5H152" stroke="#e3e3fb" strokeWidth="1.300" />
      </pattern>
    </defs>
    <rect width="100%" height="100%" fill="url(#grid)" />
    <Board />
  </svg>
);

/* ---------- data ---------- */
const menuItems = [
  ["List...", "list"], ["Layers...", "layers"], ["Nets", null, "sub"], 0,
  ["Push Down", "push", "off"], ["Pop Up", "pop", "off"], ["Place Design...", null, "off"], ["Snap 3D", null, "off"], ["Connect Pins...", null, "off"], 0,
  ["Cutout", "cutout"], ["Group into Subdesign", null, "off"], 0,
  ["Import 3D CAD..."], ["Export...", null, "sub"], 0,
  ["Cross-Probe Schematic", null, "off", "Ctrl+K"], 0,
  ["Settings...", "settings"], ["Grid settings...", "gridset"], ["Draw HFSS AirBox", "airbox"], ["Draw HFSS Ports", "ports"], 0,
  ["ViaStyles..."], ["PinStyles..."], ["Line Styles..."], ["Text Styles..."], 0,
  ["Export to SIwave with ALinks", null, "on"], 0,
  ["Measure", "ruler"], ["Erase Measurements", "erase"],
];
const signalLayers = [["top", "#5c4400", true], ["vcc", "#8db4ca", false], ["gnd", "#ff7878", false], ["bottom", "#f77fc4", true]];
const otherLayers = [
  ["Measures", "#404040", true], ["SIwave Regions", "#808080", true], ["comp_+_top", "#7272b4", false], ["sst", "#6fb24a", false],
  ["spt", "#d65040", false], ["smt", "#529a9a", false], ["smb", "#bd5484", false], ["spb", "#c4903a", false], ["ssb", "#bc5cd4", false],
  ["Outline", "#5c4400", false], ["comp_+_bot", "#8c463a", false], ["Rats", "#0000ff", false], ["Errors", "#ff0000", true],
  ["Symbols", "#800080", true], ["Postprocessing", "#289a88", true],
];

const Head = ({ title }) => (
  <PanelHead>
    <h2>{title}</h2>
    <div>
      <button aria-label="Pin"><svg width="10" height="12" viewBox="0 0 10 12"><path d="M2.500 0v6M0 6.500h10M2 .5h5.500M6.500 0v6M7.500 0v6M4.500 7v5" stroke="#666" fill="none" /></svg></button>
      <button aria-label="Close"><svg width="12" height="12" viewBox="0 0 12 12"><path d="M1 1l10 10M11 1L1 11" stroke="#666" strokeWidth="1.500" /></svg></button>
    </div>
  </PanelHead>
);
const T = ({ i, children, caret, ...rest }) => (
  <Tool aria-label={children ? undefined : i} {...rest}>
    {i && <Icon n={i} />}
    {children}
    {caret && <Caret />}
  </Tool>
);
const Pick = ({ value, w, off, label }) => (
  <PickWrap $w={w} $off={off}>
    <select aria-label={label} disabled={off}><option>{value}</option></select>
    <Caret />
  </PickWrap>
);
const AllIcon = () => (
  <svg width="11" height="11" viewBox="0 0 11 11" aria-hidden="true"><rect width="11" height="11" fill="#bbb" /><rect x="1.500" y="1.500" width="8" height="8" fill="#ddd" stroke="#000" strokeWidth="1.500" /><path d="M3.500 3.500l4 4M7.500 3.500l-4 4" stroke="#000" strokeWidth="2" /></svg>
);
const Field = ({ label, w, value, vw }) => {
  const id = `st-${label.replace(/\W/g, "")}`;
  return (
    <>
      <StatusLabel htmlFor={id} $w={w}>{label}</StatusLabel>
      <StatusValue id={id} $w={vw} defaultValue={value} readOnly />
    </>
  );
};

const LayoutMenu = () => (
  <Drop role="menu">
    {menuItems.map((m, i) => {
      if (!m) return <DropRule key={i} />;
      const [label, icon, state, keys] = m;
      return (
        <DropItem key={label} role="menuitem" disabled={state === "off"} $on={state === "on"}>
          {icon ? <Icon n={icon} s={16} /> : <span />}
          <span>{label}</span>
          {keys && <kbd>{keys}</kbd>}
          {state === "sub" && <svg width="6" height="10" viewBox="0 0 6 10"><path d="M1 1l4 4-4 4" fill="none" stroke="#222" strokeWidth="1.300" /></svg>}
        </DropItem>
      );
    })}
  </Drop>
);

export default function App() {
  return (
    <Shell>
      <Global />
      <TitleBar>
        <svg width="20" height="24" viewBox="0 0 20 24" aria-hidden="true">
          <rect width="20" height="24" fill="#3f9447" />
          <path d="M0 24L8 0h5L6 24zM13 0l7 16V0z" fill="#77bd6a" />
          <text x="10" y="16" fontSize="9" fontWeight="700" textAnchor="middle" fill="#fff" fontFamily="Liberation Sans">EDT</text>
        </svg>
        <h1>ANSYS Electronics Desktop 2020 R1 - <span>电脑主板模型仿真</span> - PCB - Layout - [<span>电脑主板模型仿真</span> - PCB - Layout]</h1>
        <WindowButton aria-label="Minimize"><svg width="12" height="12"><path d="M0 5.500h12" stroke="#fff" /></svg></WindowButton>
        <WindowButton aria-label="Restore"><svg width="13" height="13" fill="none" stroke="#fff"><rect x=".5" y="2.500" width="9" height="9.500" rx="2" /><path d="M3 .5h6a3 3 0 0 1 3 3v6" /></svg></WindowButton>
        <WindowButton aria-label="Close"><svg width="13" height="13"><path d="M.5.5l12 12M12.500.5l-12 12" stroke="#fff" strokeWidth="1.200" /></svg></WindowButton>
      </TitleBar>

      <MenuBar>
        <svg width="20" height="16" viewBox="0 0 20 16" aria-hidden="true">
          <rect x=".5" y=".5" width="18" height="15" fill="#fff" stroke="#999" />
          <rect x="2" y="3" width="9" height="10" fill="#3d8f7c" /><rect x="2" y="3" width="5" height="10" fill="#2c6c9c" />
          <path d="M13 4h4M13 7h4M13 10h4" stroke="#889" />
        </svg>
        {["File", "Edit", "View", "Project", "Draw", "Layout", "HFSS 3D Layout", "Tools", "Window", "Help"].map((m) => (
          <MenuItem key={m} $open={m === "Layout"}>
            <button>{m}</button>
            {m === "Layout" && <LayoutMenu />}
          </MenuItem>
        ))}
        <Spacer />
        <MdiButton aria-label="Minimize document"><svg width="10" height="10"><path d="M2 8h6" stroke="#6b7b8c" strokeWidth="2" /></svg></MdiButton>
        <MdiButton aria-label="Restore document"><svg width="10" height="10" fill="none" stroke="#6b7b8c"><path d="M.5 4.500h6v5h-6zM.5 5.500h6M3.500 4V.5h6v5H7M3.500 1.500h6" /></svg></MdiButton>
        <MdiButton aria-label="Close document"><svg width="10" height="10"><path d="M2 2l6 6M8 2L2 8" stroke="#6b7b8c" strokeWidth="2" /></svg></MdiButton>
      </MenuBar>

      <Ribbon>
        <Group $w={202} $pl={4} $pr={0}>
          <BigTool $w={56} $gap={10}><SaveIcon />Save</BigTool>
          <Tools $cols="67px 70px">
            <T i="cut" disabled>Cut</T><T i="copy" disabled>Copy</T><T i="paste" disabled>Paste</T>
            <T i="undo" disabled>Undo</T><T i="redo" disabled>Redo</T><T i="del" disabled>Delete</T>
          </Tools>
        </Group>
        <Group $w={568} $pl={6}>
          <Tools $cols="42px 384px auto">
            <T i="hier" caret $pad /><T i="layers" $pad /><T i="arrow" caret $pad $on />
            <Pick value="PCB" w={120} label="Design" /><ColorPick aria-label="Layer colour" /><span />
            <T>Fit All</T><T disabled>Fit Selected</T>
          </Tools>
          <Spacer />
          <Rule $l={0} $r={6} />
          <Tools $cols="36px">
            <T i="net" caret $pad /><T i="rainbow" caret $pad /><T i="grid" $pad $on />
          </Tools>
        </Group>
        <Group $pl={9} $w={296}>
          <Tools $cols="30px 20px">
            <T i="poly" /><T i="rect" /><T i="circ" /><T i="trace" /><T i="arc" />
          </Tools>
          <Rule />
          <Tools $cols="20px"><T i="wire" /><T i="letter" /></Tools>
          <Rule />
          <Tools $cols="20px"><T i="pin" /><T i="via" /><T i="solid" /></Tools>
          <Rule />
          <Tools $cols="20px"><T i="bend" /><T i="line" /><T i="unline" /></Tools>
          <Rule />
          <Tools $cols="30px 20px"><T i="volt" /><T i="amp" /><T i="stack" /><T i="probe" /></Tools>
          <Rule />
          <Tools $cols="20px"><T i="diode" /><T i="gnd" /></Tools>
        </Group>
        <Group $pl={8} $w={311}>
          <Tools $cols="88px 113px 74px 20px">
            <T i="unite">Unite</T><T i="subtract">Subtract</T><T i="intersect">Intersect</T>
            <T i="dup" disabled caret>Duplicate</T><T i="convert" caret>Convert</T><T i="reverse" disabled>Reverse Line</T>
            <T i="flip" disabled caret>Flip</T><T i="rotate" disabled>Rotate</T><T i="align" disabled>Align</T>
            <T i="cutout" /><T i="repair" /><T i="verify" />
          </Tools>
        </Group>
        <Group $pl={6} $w={102}>
          <Tools $cols="30px 30px 30px">
            <T i="snapgrid" $pad $on /><T i="snapv" $pad $on /><T i="snapmid" $pad $on />
            <T i="snapctr" $pad $on /><T i="snapedge" $pad /><T i="snapint" $pad />
            <T i="bolt" $pad $on />
          </Tools>
        </Group>
        <Group $pl={6} $w={404}>
          <Tools $cols="92px">
            <Pick value="Half Grid" w={92} label="Snap" /><Pick value="XY Plane" w={92} off label="Plane" /><Pick value="90deg" w={92} off label="Angle step" />
          </Tools>
          <Rule $l={2} />
          <Tools $cols="107px 126px">
            <T i="vrm">VRMs</T><T i="pins">Pin Groups</T><T i="wand" caret>Workflow</T>
            <T i="extents" caret>HFSS Extents</T><T i="list">List</T><span />
          </Tools>
          <BigTool $w={56}><LayoutSettingsIcon />Layout Settings</BigTool>
        </Group>
      </Ribbon>

      <TabRow>
        <RibbonTab $w={90}>Desktop</RibbonTab>
        <RibbonTab $w={57}>View</RibbonTab>
        <RibbonTab $w={74} $on>Layout</RibbonTab>
        <RibbonTab $w={102}>Simulation</RibbonTab>
        <Spacer />
        <svg width="18" height="18" viewBox="0 0 18 18" role="img" aria-label="Help">
          <circle cx="9" cy="9" r="8.500" fill="#3a76b4" />
          <path d="M6 7c0-4 6-4 6-.5 0 2.500-3 2.500-3 5M9 13v2" stroke="#fff" strokeWidth="2" fill="none" />
        </svg>
        <svg width="29" height="20" viewBox="-9 0 29 20" role="img" aria-label="Ansys">
          <rect width="20" height="20" rx="3" fill="#fcc41c" />
          <path d="M7 1h6l6 18h-5L10 8 6 19H1z" fill="#1a1a1a" />
        </svg>
      </TabRow>

      <Body>
        <Side>
          <Head title="Project Manager" />
          <Tree>
            <TreeRow>
              <svg width="34" height="17" viewBox="0 0 34 17" aria-hidden="true">
                <path d="M.5 4.500h8v8h-8zM2.500 8.500h4M4.500 6.500v4" fill="none" stroke="#444" />
                <path d="M10 8.500h7" stroke="#888" strokeDasharray="1 1" />
                <path d="M23 1h10v12H23z" fill="#e8ffe8" stroke="#128a12" />
                <path d="M18 4h9v12h-9z" fill="#dfffdf" stroke="#0aa00a" />
                <path d="M20 7h5M20 10h5M20 13h5M29 4v5" stroke="#12e012" strokeWidth="1.500" />
              </svg>
              <b>电脑主板模型仿真</b>
            </TreeRow>
          </Tree>
          <HSplit />
          <PropsPanel>
            <Head title="Properties" />
            <Frame $m="4px 4px 8px 4px" />
          </PropsPanel>
          <DockTabs>
            <DockTab>Message Manager</DockTab>
            <DockTab $on>Properties</DockTab>
          </DockTabs>
        </Side>
        <VSplit />
        <Center>
          <Upper>
            <View><LayoutView /></View>
            <VSplit />
            <LayerPanel>
              <Head title="Layers" />
              <Frame $m="4px 4px 0 5px">
                <LayerList>
                  <DielRow>
                    <label><Check type="checkbox" $size={15} />Show Dielectrics</label>
                    <input type="text" aria-label="Layer filter" />
                  </DielRow>
                  <LayerRow $h={16} $m="0 0 4px">
                    <span />
                    <svg width="15" height="11"><rect width="15" height="11" fill="#ff0" /><rect x="4" y="3" width="7" height="5" fill="#bbb" /></svg>
                    <AllIcon />
                    <svg width="11" height="11"><path d="M2 2h4l3 3v4H5L2 6z" fill="#ff0" stroke="#000" /></svg>
                    <svg width="11" height="11"><path d="M2.500 2.500h2v7h-2zM6.500 2.500h2v7h-2z" fill="#ff0" stroke="#000" /></svg>
                    <svg width="11" height="11"><circle cx="5.500" cy="5.500" r="4" fill="#ff0" stroke="#000" /><circle cx="5.500" cy="5.500" r="1.500" fill="none" stroke="#000" /></svg>
                  </LayerRow>
                  {signalLayers.map(([n, c, on]) => (
                    <LayerRow key={n}>
                      <label><Radio type="radio" name="layer" defaultChecked={n === "top"} />{n}</label>
                      <Swatch $c={c} />
                      <Check type="checkbox" $size={13} $cross defaultChecked={on} aria-label={`${n} all`} />
                      <Check type="checkbox" $size={15} defaultChecked={on} aria-label={`${n} shapes`} />
                      <Check type="checkbox" $size={15} defaultChecked={on} aria-label={`${n} traces`} />
                      <Check type="checkbox" $size={15} defaultChecked={on} aria-label={`${n} vias`} />
                      <Cut />
                    </LayerRow>
                  ))}
                  <LayerRow $h={16} $m="18px 0 4px"><span /><span /><AllIcon /></LayerRow>
                  {otherLayers.map(([n, c, on]) => (
                    <LayerRow key={n}>
                      <label><Radio type="radio" name="layer" />{n}</label>
                      <Swatch $c={c} />
                      <Check type="checkbox" $size={13} $cross defaultChecked={on} aria-label={`${n} visible`} />
                    </LayerRow>
                  ))}
                </LayerList>
              </Frame>
              <LayerTab>Layers</LayerTab>
            </LayerPanel>
          </Upper>
          <HSplit />
          <Output><Head title="" /></Output>
        </Center>
        <Rail>
          <RailTab>Nets</RailTab>
          <RailTab>Components</RailTab>
        </Rail>
      </Body>

      <Status>
        <StatusButton $w={159}>
          <svg width="11" height="12" viewBox="0 0 11 12"><circle cx="5.500" cy="6" r="5" fill="#fff" stroke="#8aa0bc" /><path d="M5.500 2.500v1.500M5.500 5v4.500" stroke="#2a5fb8" strokeWidth="2" /></svg>
          Hide 1 Messages
        </StatusButton>
        <StatusButton $w={143}>
          <svg width="11" height="12"><path d="M0 4h11" stroke="#555" /><path d="M0 6h7" stroke="#0e0" strokeWidth="3" /></svg>
          Hide Progress
        </StatusButton>
        <Field label="X:" w={20} value="-433.9656" />
        <Field label="Y:" w={23} value="-251.3933" />
        <Field label="Delta X:" w={58} value="-125.0230" />
        <Field label="Delta Y:" w={58} value="-158.9071" />
        <Field label="Distance:" w={68} value="202.1935" />
        <UnitWrap>
          <select aria-label="Unit"><option>mm</option></select>
          <span><svg width="10" height="5"><path d="M0 0h10L5 5z" /></svg></span>
        </UnitWrap>
        <Field label="Angle" w={46} value="-128.2" vw={54} />
      </Status>

      <Annotation width="700" height="780" fill="none" stroke="#ee1c25" strokeWidth="1.500">
        <ellipse cx="333" cy="41" rx="41" ry="21" />
        <ellipse cx="453" cy="694" rx="127" ry="17" />
        <path d="M358 70l6-2L474.500 650l7-4-6 24-14-20 7 1z" fill="#ee1c25" stroke="none" />
      </Annotation>
    </Shell>
  );
}
